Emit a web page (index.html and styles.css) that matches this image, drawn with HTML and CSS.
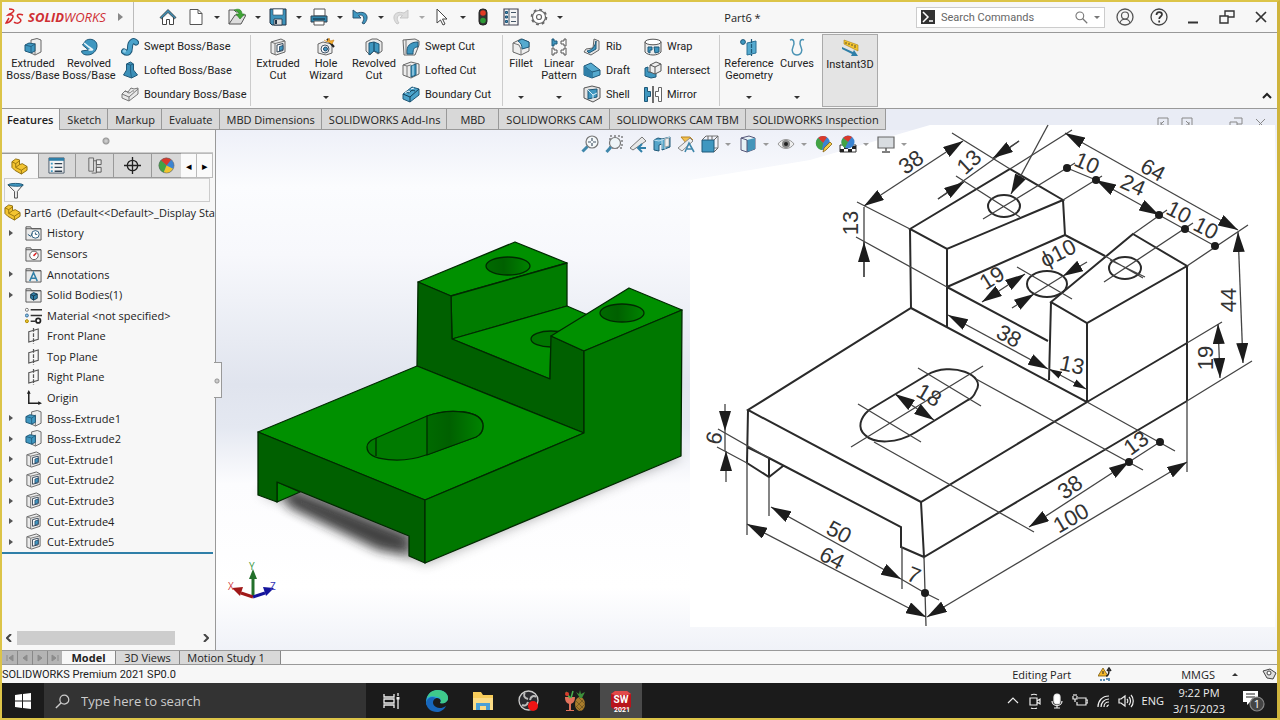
FILE: index.html
```html
<!DOCTYPE html>
<html lang="en">

<head>
    <meta charset="UTF-8">
    <meta name="viewport" content="width=device-width, initial-scale=1.0">
    <title>Part6 - SOLIDWORKS</title>
    <link rel="stylesheet" href="styles.css">
</head>

<body>
    <!-- icon set -->
    <svg class="defs" width="0" height="0" aria-hidden="true">
        <symbol id="i-home" viewBox="0 0 18 18"><path d="M3.500 9v7.500h4v-5h3v5h4V9" fill="#fff" stroke="#444" /><path d="M1 9.500L9 1.500l8 8-1.500 1.200L9 4.500l-6.500 6.200z" fill="#3a8fb7" stroke="#333" stroke-width=".8" /></symbol>
        <symbol id="i-new" viewBox="0 0 18 18"><path d="M3 1.500h8l4 4v11H3z" fill="#fff" stroke="#555" /><path d="M11 1.500v4h4" fill="none" stroke="#555" /></symbol>
        <symbol id="i-open" viewBox="0 0 18 18"><path d="M1 16V2h5l2 2h4v3" fill="#eee" stroke="#555" /><path d="M1 16L7 7h11l-5 9z" fill="#ddd" stroke="#555" /><path d="M6 2c5-2 8 0 8 4h2.500L12 11 8 6h3c0-2-2-3-5-4z" fill="#3fa535" stroke="#237a1c" stroke-width=".6" /></symbol>
        <symbol id="i-save" viewBox="0 0 18 18"><path d="M1 1h16v16H3l-2-2z" fill="#3d93bb" stroke="#234" /><path d="M4 1h10v6H4z" fill="#fff" stroke="#345" stroke-width=".6" /><path d="M5 11h8v6H5z" fill="#ddd" stroke="#234" stroke-width=".8" /><path d="M7 12v4" stroke="#234" stroke-width="2" /></symbol>
        <symbol id="i-print" viewBox="0 0 18 18"><path d="M4 1h11v7H4z" fill="#fff" stroke="#555" /><path d="M1 8h16v6H1z" fill="#2f86ad" stroke="#345" /><path d="M4 13h10v4H4z" fill="#fff" stroke="#555" /><path d="M3 11h12" stroke="#123" /></symbol>
        <symbol id="i-undo" viewBox="0 0 18 18"><path d="M2 2v8h8L7.500 7.500c5-2 7 3 3.500 7.500l2 1c6-6 3-14-7-11z" fill="#3f97c0" stroke="#244a66" stroke-width=".9" /></symbol>
        <symbol id="i-redo" viewBox="0 0 18 18"><path d="M16 2v8H8l2.500-2.500c-5-2-7 3-3.500 7.500l-2 1C-1 10 2 2 12 5z" fill="#ddd" stroke="#c4c4c4" stroke-width=".9" /></symbol>
        <symbol id="i-cursor" viewBox="0 0 18 18"><path d="M4 1l10 10H9.500l2.500 5-2 1-2.500-5L4 15z" fill="#fff" stroke="#444" /></symbol>
        <symbol id="i-light" viewBox="0 0 18 18"><rect x="5" y="1" width="8" height="16" rx="3.500" fill="#333" stroke="#222" /><circle cx="9" cy="5" r="2.800" fill="#e23a24" /><circle cx="9" cy="12.500" r="2.800" fill="#2d9a36" /></symbol>
        <symbol id="i-options" viewBox="0 0 18 18"><path d="M2 1h14v16H2z" fill="#f4f4f4" stroke="#445" stroke-width="1.200" /><path d="M7 1v16M9 4.500h5M9 9h5M9 13.500h5" stroke="#456" /><path d="M3.500 3.500h2v2h-2zM3.500 8h2v2h-2zM3.500 12.500h2v2h-2z" fill="#3f97c0" stroke="#257" /></symbol>
        <symbol id="i-gear" viewBox="0 0 18 18"><circle cx="9" cy="9" r="6.500" fill="#fff" stroke="#666" stroke-width="1.200" /><circle cx="9" cy="9" r="7.500" fill="none" stroke="#666" stroke-width="1.600" stroke-dasharray="2.900 3" /><circle cx="9" cy="9" r="2.500" fill="none" stroke="#666" stroke-width="1.200" /></symbol>
        <symbol id="i-boss" viewBox="0 0 18 18"><path d="M7 2l6-1.500 4 1.500v12l-6 3-4-2z" fill="#eee" stroke="#666" /><path d="M11 5v12" stroke="#777" /><path d="M1 7l4-2 6 1v7l-4 2-6-2z" fill="#3f97c0" stroke="#1f5878" /><path d="M1 7l6 1.500L11 6M7 8.500V15" fill="none" stroke="#1f5878" stroke-width=".8" /></symbol>
        <symbol id="i-revolve" viewBox="0 0 18 18"><path d="M4 5C6 0 14 0 16.500 5c2 5-2 12-9 12-4 0-6-2-6-4l7-1-6-5z" fill="#3f97c0" stroke="#1f5878" /><path d="M4 5l5 4 4 3M8.500 12l4 0" fill="none" stroke="#e8f5fb" stroke-width="1.600" /></symbol>
        <symbol id="i-sweep" viewBox="0 0 18 18"><path d="M3 13.500c4 3 6 0 6-4 0-6 4-8 6-5" fill="none" stroke="#1f5878" stroke-width="6" stroke-linecap="round" /><path d="M3 13.500c4 3 6 0 6-4 0-6 4-8 6-5" fill="none" stroke="#4ba3cb" stroke-width="4" stroke-linecap="round" /><circle cx="3.500" cy="13" r="1.700" fill="#8ccae6" /></symbol>
        <symbol id="i-loft" viewBox="0 0 18 18"><path d="M5.500 3l4-2 3 2v6l4 5-6 3-8-3 3-5z" fill="#3b8fb8" stroke="#1f5878" /><path d="M5.500 3l4 1 3-1M9.500 4v6l1 7" fill="none" stroke="#1f5878" stroke-width=".8" /></symbol>
        <symbol id="i-boundary" viewBox="0 0 18 18"><path d="M1 9l3-3 3 1 3-4 3 1 4-1v6l-9 7-7-3z" fill="#e9e9e9" stroke="#777" /><path d="M1 9l7 3 9-8M8 12v4M4 6c2 0 2 2 4 2s3-3 5-2" fill="none" stroke="#777" /></symbol>
        <symbol id="i-boundcut" viewBox="0 0 18 18"><path d="M1 9l9-7 7 2v6l-9 7-7-3z" fill="#4ba3cb" stroke="#1f5878" /><path d="M1 9l7 3 9-8M8 12v5M4 7c2 0 3 2 4 0s3-2 5-1" fill="none" stroke="#123f58" /><path d="M3 8l3-2 2 1M9 4l3-1" stroke="#e5f4fb" fill="none" /></symbol>
        <symbol id="i-cut" viewBox="0 0 18 18"><path d="M2 4l10-3 4 2v11l-9 3-5-2z" fill="#ececec" stroke="#666" /><path d="M2 4l4 1.500L16 3M6 5.500V17" fill="none" stroke="#777" /><path d="M8 7l6-1.500v7L8 14z" fill="#fff" stroke="#345" /><path d="M10.500 8.500L14 7.500v4l-3.500 1.500z" fill="#3f97c0" stroke="#246" stroke-width=".8" /></symbol>
        <symbol id="i-hole" viewBox="0 0 18 18"><path d="M1 6l5-2 9 2v9l-6 2-8-2z" fill="#ececec" stroke="#666" /><circle cx="8" cy="11" r="4" fill="#fff" stroke="#456" /><circle cx="8.500" cy="11" r="2" fill="#3f97c0" stroke="#246" /><path d="M10 1l7 8" stroke="#222" stroke-width="2" /><path d="M7 2l3 2 2-4 1 3 4-1-2 4" fill="#f0ac2c" stroke="#c8780f" stroke-width=".6" /></symbol>
        <symbol id="i-revcut" viewBox="0 0 18 18"><path d="M1 4l6-3h5l5 3v9l-4 3-4-3-4 4-4-4z" fill="#e9e9e9" stroke="#666" /><path d="M4 5l5-1v9l-5 4zM9 4l5 2v9l-5-2z" fill="#3f97c0" stroke="#1f5878" /></symbol>
        <symbol id="i-sweepcut" viewBox="0 0 18 18"><path d="M1 2l12-1 4 2v4l-4 10H2z" fill="#ececec" stroke="#666" /><path d="M5 16C4 8 8 4 16 4v5c-4 0-5 2-5 7z" fill="#3f97c0" stroke="#1f5878" /><path d="M4 2v14" stroke="#777" /></symbol>
        <symbol id="i-loftcut" viewBox="0 0 18 18"><path d="M1 4l8-3 8 2v10l-8 4-8-3z" fill="#ececec" stroke="#666" /><path d="M5 5v11M1 4l4 1 4-1" stroke="#777" fill="none" /><path d="M9 5l5-2v11l-5 2z" fill="#3f97c0" stroke="#1f5878" /><path d="M11 4.500v10" stroke="#cfe8f4" /></symbol>
        <symbol id="i-fillet" viewBox="0 0 18 18"><path d="M1 5l8-4 8 3v9l-8 4-8-3z" fill="#eee" stroke="#666" /><path d="M6 3l4-2 7 3v5l-7 2c0-4-1-6-4-8z" fill="#55aacf" stroke="#1f5878" /><path d="M1 5l6 2 2 4v6" fill="none" stroke="#777" /></symbol>
        <symbol id="i-pattern" viewBox="0 0 18 18"><path d="M2 1h2v2h3v3H4v2H2z" fill="#3f97c0" stroke="#1f5878" /><path d="M11 3h3V1h2v7h-2V6h-3zM2 10h2v2h3v3H4v2H2zM11 12h3v-2h2v7h-2v-2h-3z" fill="#fff" stroke="#555" /></symbol>
        <symbol id="i-rib" viewBox="0 0 18 18"><path d="M11 1l5 2v9l-8 5-7-3 2-3 7-1z" fill="#e4e4e4" stroke="#666" /><path d="M13 3v8l-7 4-2-2c5-1 8-4 9-10z" fill="#3f97c0" stroke="#1f5878" /></symbol>
        <symbol id="i-draft" viewBox="0 0 18 18"><path d="M1 5l7-3 9 7v5l-8 3-8-3z" fill="#55aacf" stroke="#1f5878" /><path d="M1 5l8 6 8-2M9 11v6" stroke="#1f5878" fill="none" /><path d="M1 5l8 6v6l-8-3z" fill="#2f7fa8" /></symbol>
        <symbol id="i-shell" viewBox="0 0 18 18"><path d="M1 3l8-2 8 2v10l-7 4-9-4z" fill="#e4e4e4" stroke="#555" /><path d="M5 5l9-1v8l-9 2z" fill="#3f97c0" stroke="#1f5878" /><path d="M5 5l5 5v5M10 10l4-2" stroke="#d9eef7" fill="none" /></symbol>
        <symbol id="i-wrap" viewBox="0 0 18 18"><path d="M1 4v10c3 4 13 4 16 0V4z" fill="#ececec" stroke="#555" /><ellipse cx="9" cy="4" rx="8" ry="2.800" fill="#fff" stroke="#555" /><path d="M4 9h4v3H6v3l-2-1zM10 9h5v5l-4 1z" fill="#3f97c0" stroke="#1f5878" /></symbol>
        <symbol id="i-intersect" viewBox="0 0 18 18"><path d="M1 7l3-1v5h8v5l-5 1-6-2z" fill="#3f97c0" stroke="#1f5878" /><path d="M6 4l6-3 5 2v7l-6 3-5-2z" fill="#eee" stroke="#555" /><path d="M6 4l5 2 6-3M11 6v7" fill="none" stroke="#555" /></symbol>
        <symbol id="i-mirror" viewBox="0 0 18 18"><path d="M0.500 2.500h3v4h3v5h-3v5h-3z" fill="#3f97c0" stroke="#1f5878" /><path d="M17.500 2.500h-3v4h-3v5h3v5h3z" fill="#fff" stroke="#666" /><path d="M9 1v17" stroke="#333" stroke-width="1.400" /></symbol>
        <symbol id="i-refgeo" viewBox="0 0 18 18"><circle cx="3" cy="4" r="2.400" fill="#3f97c0" stroke="#1f5878" /><path d="M7 5l9-2v12l-9 2z" fill="#55aacf" stroke="#2a7196" /><path d="M11.500 1v17" stroke="#1f5878" stroke-width="1.200" stroke-dasharray="4 1" /></symbol>
        <symbol id="i-curves" viewBox="0 0 18 18"><path d="M2 2c4-2 5 3 3 7s0 8 4 8 6-4 4-8-1-9 3-7" fill="none" stroke="#4b93b4" stroke-width="1.500" /></symbol>
        <symbol id="i-instant" viewBox="0 0 18 18"><path d="M3 1l14 5v6L3 5z" fill="#f5c52e" stroke="#a77f10" stroke-width=".6" /><path d="M5 3v2M8 4v2M11 5v2M14 6v3" stroke="#333" stroke-width=".8" /><path d="M1 8l11 5 1-2 4 6-7 0 1-2-10-5z" fill="#2f7fa8" /></symbol>

        <symbol id="i-part" viewBox="0 0 18 18"><path d="M1 4l4-3 4 1v5l3-1 5 3v4l-6 4-7-4-3-3z" fill="#f3c431" stroke="#8d6c0b" /><path d="M1 4l4 2 4-3M5 6v4l6 3M9 7l-4 3M11 13l6-4M11 13v4" fill="none" stroke="#8d6c0b" stroke-width=".9" /></symbol>
        <symbol id="i-props" viewBox="0 0 18 18"><path d="M1 1h16v16H1z" fill="#f4f4f4" stroke="#456" /><path d="M1 1h16v3H1z" fill="#2f7fa8" /><path d="M7 7h8M7 11h8M7 15h8" stroke="#345" stroke-width="1.500" /><path d="M3 6h2v2H3zM3 10h2v2H3zM3 14h2v2H3z" fill="#3f97c0" /></symbol>
        <symbol id="i-config" viewBox="0 0 18 18"><path d="M3 1h5v14H3zM8 4h3v13H6" fill="#ddd" stroke="#666" /><path d="M11 3h5v5h-5zM11 11h5v5h-5z" fill="#eee" stroke="#555" /></symbol>
        <symbol id="i-target" viewBox="0 0 18 18"><circle cx="9" cy="9" r="5.500" fill="none" stroke="#222" stroke-width="1.400" /><path d="M9 0v18M0 9h18" stroke="#222" stroke-width="1.400" /></symbol>
        <symbol id="i-ball" viewBox="0 0 18 18"><circle cx="9" cy="9" r="8" fill="#3b84d1" /><path d="M9 9L3 3.500A8 8 0 0 1 14 2.700z" fill="#d93a2b" /><path d="M9 9L3 3.500A8 8 0 0 0 6 16.500z" fill="#43a344" /><path d="M9 9L6 16.500a8 8 0 0 0 10-4z" fill="#f0c52e" /><circle cx="9" cy="9" r="8" fill="none" stroke="#666" stroke-width=".6" /></symbol>
        <symbol id="i-paint" viewBox="0 0 18 18"><circle cx="8" cy="8" r="7" fill="#3b84d1" /><path d="M8 8L3 3A7 7 0 0 1 12 2.300z" fill="#d93a2b" /><path d="M8 8L3 3a7 7 0 0 0 4 12z" fill="#43a344" /><path d="M8 17l1-4 6-6 2 2-6 6z" fill="#f5cf4a" stroke="#876012" stroke-width=".8" /></symbol>
        <symbol id="i-funnel" viewBox="0 0 18 18"><path d="M1 3h16l-6 7v7H8v-7z" fill="#f6f6f6" stroke="#444" /><path d="M1 3c2-2 14-2 16 0s-14 2-16 0z" fill="#3f97c0" stroke="#1f5878" /></symbol>
        <symbol id="i-history" viewBox="0 0 18 18"><path d="M1 3h5l1 2h10v12H1z" fill="#eaeaea" stroke="#555" /><path d="M1 5h16" stroke="#555" /><circle cx="11" cy="11" r="4" fill="#fff" stroke="#257" /><path d="M11 9v2h2M3 11l3 2 2-3" fill="none" stroke="#257" /></symbol>
        <symbol id="i-sensors" viewBox="0 0 18 18"><path d="M1 3h5l1 2h10v12H1z" fill="#eaeaea" stroke="#555" /><path d="M1 5h16" stroke="#555" /><circle cx="9.500" cy="11" r="4.500" fill="#fff" stroke="#555" /><path d="M9 11.500l3-3" stroke="#d22" stroke-width="1.600" /></symbol>
        <symbol id="i-annot" viewBox="0 0 18 18"><path d="M1 3h5l1 2h10v12H1z" fill="#eaeaea" stroke="#555" /><path d="M1 5h16" stroke="#555" /><path d="M5 16L9 7l4 9M7 13h5" fill="none" stroke="#2f7fa8" stroke-width="1.500" /></symbol>
        <symbol id="i-bodies" viewBox="0 0 18 18"><path d="M1 3h5l1 2h10v12H1z" fill="#eaeaea" stroke="#555" /><path d="M1 5h16" stroke="#555" /><path d="M6 9l3-2 4 1.500V13l-4 2-3-2z" fill="#2f7fa8" stroke="#153f56" /><path d="M6 9l3 1.500L13 8.500M9 10.500V15" fill="none" stroke="#123" stroke-width=".8" /></symbol>
        <symbol id="i-material" viewBox="0 0 18 18"><path d="M6 3h12M6 9h12M6 15h5" stroke="#333" stroke-width="1.600" /><circle cx="2" cy="3" r="1.600" fill="#fff" stroke="#777" /><circle cx="2" cy="9" r="1.600" fill="#8ccae6" stroke="#369" /><circle cx="2" cy="15" r="1.600" fill="#f0c52e" stroke="#a80" /><circle cx="14" cy="14.500" r="2.400" fill="#fff" stroke="#222" stroke-width="1.800" /></symbol>
        <symbol id="i-plane" viewBox="0 0 18 18"><path d="M4 5l10-3v11L4 16z" fill="none" stroke="#555" stroke-width="1.200" /><path d="M9 1v17" stroke="#555" stroke-width="1.300" stroke-dasharray="4 1.500" /></symbol>
        <symbol id="i-origin" viewBox="0 0 18 18"><path d="M4 3v12h12" fill="none" stroke="#222" stroke-width="1.600" /><path d="M2 5l2-4 2 4zM14 13l4 2-4 2z" fill="#222" /></symbol>

        <symbol id="i-zoomfit" viewBox="0 0 18 18"><circle cx="11" cy="7" r="6" fill="#f4f8fa" stroke="#777" stroke-width="1.200" /><path d="M11 3v8M7 7h8" stroke="#456" stroke-width="1.200" stroke-dasharray="3 2" /><path d="M6.500 11.500L1.500 16.500" stroke="#3f87ab" stroke-width="3" /></symbol>
        <symbol id="i-zoomarea" viewBox="0 0 18 18"><path d="M5 1h12v12H5z" fill="none" stroke="#444" stroke-dasharray="2 2" /><circle cx="10" cy="8" r="5.500" fill="#eef5f8" stroke="#777" stroke-width="1.200" /><path d="M6 12l-4.500 5" stroke="#3f87ab" stroke-width="3" /></symbol>
        <symbol id="i-prev" viewBox="0 0 18 18"><path d="M1 13L13 2l4 4L4 15z" fill="#e8e8e8" stroke="#777" /><path d="M17 13H10M13 9l-4 4 4 4" fill="none" stroke="#2f7fa8" stroke-width="2" /></symbol>
        <symbol id="i-section" viewBox="0 0 18 18"><path d="M1 5l4-2 4 1 8-2v10l-8 3v-6l-3 1v6l-5-1z" fill="#55a5c9" stroke="#1f5878" /><path d="M9 4v10M1 5l5 1 11-4M12 5v9" stroke="#bfe0ef" fill="none" /><path d="M12 4l4-1v8l-4 1z" fill="#eee" stroke="#888" stroke-width=".6" /></symbol>
        <symbol id="i-dynview" viewBox="0 0 18 18"><path d="M4 2h9l3 3-6 4z" fill="#f3c14d" stroke="#b98522" /><path d="M1 13L13 3l3 3L5 16z" fill="#eee" stroke="#888" /><path d="M8 17l4-9 5 9M10 14h5" fill="none" stroke="#3f87ab" stroke-width="1.600" /></symbol>
        <symbol id="i-orient" viewBox="0 0 18 18"><path d="M5 1h12v12h-4" fill="none" stroke="#777" /><path d="M1 5h12v12H1z" fill="#3f97c0" stroke="#1f5878" /><path d="M1 5l4-4M13 5l4-4M13 17l4-4M7 1v4M11 1v4" stroke="#666" fill="none" /></symbol>
        <symbol id="i-style" viewBox="0 0 18 18"><path d="M2 3l8-2 6 2v11l-8 3-6-2z" fill="#e6f1f6" stroke="#557" /><path d="M8 5l8-2v11l-8 3z" fill="#4595ba" /><path d="M2 3l6 2v12" stroke="#557" fill="none" /></symbol>
        <symbol id="i-eye" viewBox="0 0 18 18"><path d="M1 9c4-6 12-6 16 0-4 6-12 6-16 0z" fill="#eee" stroke="#999" /><circle cx="9" cy="9" r="4" fill="#888" /><circle cx="9" cy="9" r="2" fill="#222" /></symbol>
        <symbol id="i-monitor" viewBox="0 0 18 18"><path d="M1 2h16v11H1z" fill="#d8dce0" stroke="#666" stroke-width="1.200" /><path d="M9 13v3M5 17h8" stroke="#555" stroke-width="1.400" /></symbol>
        <symbol id="i-checker" viewBox="0 0 18 18"><path d="M1 10h16v7H1z" fill="#fff" stroke="#333" /><path d="M1 14h4v3H1zM9 14h4v3H9zM5 11h4v3H5zM13 11h4v3h-4z" fill="#222" /><circle cx="9" cy="7" r="6.500" fill="#3b84d1" /><path d="M9 7L4 3a6.500 6.500 0 0 1 9-1z" fill="#d93a2b" /><path d="M9 7L4 3a6.500 6.500 0 0 0 2 10z" fill="#43a344" /></symbol>
        <symbol id="i-restore" viewBox="0 0 18 18"><path d="M7 3h9v6h-9z" fill="#f7f7f7" stroke="currentColor" stroke-width="1.400" /><path d="M2 8h8v7H2z" fill="#f7f7f7" stroke="currentColor" stroke-width="1.400" /></symbol>
        <symbol id="i-close" viewBox="0 0 18 18"><path d="M4 4l10 10M14 4L4 14" stroke="currentColor" stroke-width="1.700" /></symbol>
        <symbol id="i-min" viewBox="0 0 18 18"><path d="M4 14.500h10" stroke="currentColor" stroke-width="2" /></symbol>
        <symbol id="i-user" viewBox="0 0 18 18"><circle cx="9" cy="9" r="8" fill="none" stroke="#555" stroke-width="1.300" /><circle cx="9" cy="7.500" r="3.500" fill="none" stroke="#555" stroke-width="1.200" /><path d="M4 15c1-5 9-5 10 0" fill="none" stroke="#555" stroke-width="1.200" /></symbol>
        <symbol id="i-help" viewBox="0 0 18 18"><circle cx="9" cy="9" r="8" fill="none" stroke="#444" stroke-width="1.300" /><path d="M6.500 7c0-4 5.500-3.500 5.500-.5C12 8.500 9.200 8.500 9.200 11M9.200 12.500v2" fill="none" stroke="#333" stroke-width="1.700" /></symbol>
        <symbol id="i-search" viewBox="0 0 18 18"><circle cx="7.500" cy="7.500" r="5" fill="none" stroke="currentColor" stroke-width="1.400" /><path d="M11 11l6 6" stroke="currentColor" stroke-width="1.600" /></symbol>
    </svg>

    <div class="app">
        <header class="titlebar">
            <a class="logo" href="#">
                <svg width="20" height="20" viewBox="0 0 20 20" fill="none" stroke="#d4282c" stroke-width="1.500"><path d="M4 2c4 0 6 1 4 3S4 7 3 8c5-1 6 1 4 4s-4 4-6 4l3-5M18 8c-4-2-7 0-5 2s4 3 2 5-5 1-6 0" /></svg>
                <span><b>SOLID</b>WORKS</span>
                <i class="caret-right"></i>
            </a>
            <nav class="tools">
                <button class="tool apart" aria-label="Home"><svg><use href="#i-home" /></svg></button>
                <button class="tool" aria-label="New"><svg><use href="#i-new" /></svg></button><button class="drop" aria-label="New menu"></button>
                <button class="tool" aria-label="Open"><svg><use href="#i-open" /></svg></button><button class="drop" aria-label="Open menu"></button>
                <button class="tool" aria-label="Save"><svg><use href="#i-save" /></svg></button><button class="drop" aria-label="Save menu"></button>
                <button class="tool" aria-label="Print"><svg><use href="#i-print" /></svg></button><button class="drop" aria-label="Print menu"></button>
                <button class="tool" aria-label="Undo"><svg><use href="#i-undo" /></svg></button><button class="drop" aria-label="Undo menu"></button>
                <button class="tool" aria-label="Redo"><svg><use href="#i-redo" /></svg></button><button class="drop faded" aria-label="Redo menu"></button>
                <button class="tool" aria-label="Select"><svg><use href="#i-cursor" /></svg></button><button class="drop" aria-label="Select menu"></button>
                <button class="tool apart" aria-label="Rebuild"><svg><use href="#i-light" /></svg></button>
                <button class="tool apart" aria-label="File properties"><svg><use href="#i-options" /></svg></button>
                <button class="tool" aria-label="Options"><svg><use href="#i-gear" /></svg></button><button class="drop" aria-label="Options menu"></button>
            </nav>
            <h1>Part6 *</h1>
            <label class="command-search">
                <svg width="14" height="14" viewBox="0 0 14 14"><path d="M0 0h14v14H0z" fill="#333" /><path d="M2 2l5 5-5 5M8 11h4" fill="none" stroke="#fff" stroke-width="1.500" /></svg>
                <input type="text" placeholder="Search Commands">
                <svg class="glass" width="14" height="14"><use href="#i-search" /></svg>
                <i class="arrow"></i>
            </label>
            <div class="window-buttons">
                <button aria-label="Account"><svg><use href="#i-user" /></svg></button>
                <button aria-label="Help"><svg><use href="#i-help" /></svg></button>
                <button aria-label="Minimize"><svg><use href="#i-min" /></svg></button>
                <button aria-label="Restore"><svg><use href="#i-restore" /></svg></button>
                <button aria-label="Close"><svg><use href="#i-close" /></svg></button>
            </div>
        </header>

        <section class="ribbon">
            <div class="group group-boss">
                <button class="big wide"><svg><use href="#i-boss" /></svg><span>Extruded Boss/Base</span></button>
                <button class="big wide"><svg><use href="#i-revolve" /></svg><span>Revolved Boss/Base</span></button>
                <div class="stack">
                    <button><svg><use href="#i-sweep" /></svg>Swept Boss/Base</button>
                    <button><svg><use href="#i-loft" /></svg>Lofted Boss/Base</button>
                    <button><svg><use href="#i-boundary" /></svg>Boundary Boss/Base</button>
                </div>
            </div>
            <div class="group group-cut">
                <button class="big"><svg><use href="#i-cut" /></svg><span>Extruded Cut</span></button>
                <button class="big"><svg><use href="#i-hole" /></svg><span>Hole Wizard</span><i class="arrow"></i></button>
                <button class="big"><svg><use href="#i-revcut" /></svg><span>Revolved Cut</span></button>
                <div class="stack">
                    <button><svg><use href="#i-sweepcut" /></svg>Swept Cut</button>
                    <button><svg><use href="#i-loftcut" /></svg>Lofted Cut</button>
                    <button><svg><use href="#i-boundcut" /></svg>Boundary Cut</button>
                </div>
            </div>
            <div class="group group-detail">
                <button class="big slim"><svg><use href="#i-fillet" /></svg><span>Fillet</span><i class="arrow"></i></button>
                <button class="big narrow"><svg><use href="#i-pattern" /></svg><span>Linear Pattern</span><i class="arrow"></i></button>
                <div class="stack first">
                    <button><svg><use href="#i-rib" /></svg>Rib</button>
                    <button><svg><use href="#i-draft" /></svg>Draft</button>
                    <button><svg><use href="#i-shell" /></svg>Shell</button>
                </div>
                <div class="stack">
                    <button><svg><use href="#i-wrap" /></svg>Wrap</button>
                    <button><svg><use href="#i-intersect" /></svg>Intersect</button>
                    <button><svg><use href="#i-mirror" /></svg>Mirror</button>
                </div>
            </div>
            <div class="group group-ref">
                <button class="big wide"><svg><use href="#i-refgeo" /></svg><span>Reference Geometry</span><i class="arrow"></i></button>
                <button class="big narrow"><svg><use href="#i-curves" /></svg><span>Curves</span><i class="arrow"></i></button>
            </div>
            <button class="big wide pressed"><svg><use href="#i-instant" /></svg><span>Instant3D</span></button>
            <button class="collapse" aria-label="Collapse ribbon"><svg width="10" height="8" viewBox="0 0 10 8"><path d="M1 6l4-4 4 4" fill="none" stroke="#222" stroke-width="2" /></svg></button>
        </section>

        <nav class="tabs">
            <button class="active">Features</button>
            <button>Sketch</button>
            <button>Markup</button>
            <button>Evaluate</button>
            <button>MBD Dimensions</button>
            <button>SOLIDWORKS Add-Ins</button>
            <button class="roomy">MBD</button>
            <button>SOLIDWORKS CAM</button>
            <button>SOLIDWORKS CAM TBM</button>
            <button>SOLIDWORKS Inspection</button>
            <div class="doc-buttons">
                <svg width="12" height="12" viewBox="0 0 12 12"><path d="M1 1h10v10H1zM7 4L4 7M4 5v3h3" /></svg>
                <svg width="12" height="12" viewBox="0 0 12 12"><path d="M1 1h10v10H1zM5 4l3 3M8 5v3H5" /></svg>
                <svg class="gap" width="14" height="12" viewBox="0 0 14 12"><path d="M5 1h8v6H8M1 5h7v6H1z" /></svg>
                <svg width="12" height="12" viewBox="0 0 12 12"><path d="M1 2l9 9M10 2L1 11" /></svg>
            </div>
        </nav>

        <main class="workspace">
            <aside class="panel">
                <div class="splitter"></div>
                <div class="panel-tabs">
                    <button class="active" aria-label="Feature tree"><svg><use href="#i-part" /></svg></button>
                    <button aria-label="Properties"><svg><use href="#i-props" /></svg></button>
                    <button aria-label="Configurations"><svg><use href="#i-config" /></svg></button>
                    <button aria-label="Dimensions"><svg><use href="#i-target" /></svg></button>
                    <button class="cut-off" aria-label="Display"><svg><use href="#i-ball" /></svg></button>
                    <button class="spin" aria-label="Previous tab">◂</button>
                    <button class="spin" aria-label="Next tab">▸</button>
                </div>
                <label class="filter"><svg><use href="#i-funnel" /></svg><input type="text" aria-label="Filter tree"></label>
                <ul class="tree">
                    <li class="root"><svg><use href="#i-part" /></svg>Part6&nbsp; (Default&lt;&lt;Default&gt;_Display Sta</li>
                    <li class="open"><svg><use href="#i-history" /></svg>History</li>
                    <li><svg><use href="#i-sensors" /></svg>Sensors</li>
                    <li class="open"><svg><use href="#i-annot" /></svg>Annotations</li>
                    <li class="open"><svg><use href="#i-bodies" /></svg>Solid Bodies(1)</li>
                    <li><svg><use href="#i-material" /></svg>Material &lt;not specified&gt;</li>
                    <li><svg><use href="#i-plane" /></svg>Front Plane</li>
                    <li><svg><use href="#i-plane" /></svg>Top Plane</li>
                    <li><svg><use href="#i-plane" /></svg>Right Plane</li>
                    <li><svg><use href="#i-origin" /></svg>Origin</li>
                    <li class="open"><svg><use href="#i-boss" /></svg>Boss-Extrude1</li>
                    <li class="open"><svg><use href="#i-boss" /></svg>Boss-Extrude2</li>
                    <li class="open"><svg><use href="#i-cut" /></svg>Cut-Extrude1</li>
                    <li class="open"><svg><use href="#i-cut" /></svg>Cut-Extrude2</li>
                    <li class="open"><svg><use href="#i-cut" /></svg>Cut-Extrude3</li>
                    <li class="open"><svg><use href="#i-cut" /></svg>Cut-Extrude4</li>
                    <li class="open"><svg><use href="#i-cut" /></svg>Cut-Extrude5</li>
                </ul>
                <div class="scrollbar">
                    <svg width="6" height="8" viewBox="0 0 6 8"><path d="M5 0L1 4l4 4" /></svg>
                    <i class="thumb"></i>
                    <svg width="6" height="8" viewBox="0 0 6 8"><path d="M1 0l4 4-4 4" /></svg>
                </div>
                <div class="handle"></div>
            </aside>

            <section class="canvas">
                <svg class="scene" viewBox="216 130 1061 520">
                    <defs>
                        <marker id="arrow" viewBox="0 0 20 12" refX="20" refY="6" markerWidth="20" markerHeight="12" markerUnits="userSpaceOnUse" orient="auto-start-reverse"><path d="M0 0l20 6-20 6z" fill="#1c1c1c" /></marker>
                        <marker id="small" viewBox="0 0 20 12" refX="20" refY="6" markerWidth="13" markerHeight="8" markerUnits="userSpaceOnUse" orient="auto-start-reverse"><path d="M0 0l20 6-20 6z" fill="#1c1c1c" /></marker>
                        <linearGradient id="bore"><stop offset="0" stop-color="#006a00" /><stop offset=".4" stop-color="#006000" /><stop offset="1" stop-color="#008400" /></linearGradient>
                        <filter id="soft" x="-20%" y="-20%" width="140%" height="140%"><feGaussianBlur stdDeviation="6" /></filter>
                    </defs>

                    <!-- shadow on the ground -->
                    <path d="M258 492l150 66 18 6 255-107-20-14-330 30z" fill="#555" opacity=".45" filter="url(#soft)" />
                    <path d="M282 486l127 50v18l-30-4-90-44z" fill="#222" opacity=".8" filter="url(#soft)" />

                    <!-- solid model -->
                    <g stroke="#002a00" stroke-width="1.300" stroke-linejoin="round">
                        <path d="M515 242l52 21-116 33-33-14z" fill="#009000" />
                        <path d="M451 296l116-33v43l-115 33z" fill="#007c00" />
                        <path d="M452 339l115-33 21 9-37 21-1 43z" fill="#009000" />
                        <ellipse cx="551" cy="339" rx="20" ry="8" fill="#007600" />
                        <path d="M418 282l33 14 1 43 98 40 1-43 33 15v82l-167-67z" fill="#006000" />
                        <path d="M629 288l53 22-98 41-33-15z" fill="#009000" />
                        <path d="M417 366l167 67-159 67-167-68z" fill="#009000" />
                        <path d="M277 482l23 10-23 10z" fill="#008400" />
                        <path d="M258 432l167 68v63l-16-7v-20l-132-54v20l-19-7z" fill="#006000" />
                        <path d="M682 310l-1 146-256 107v-63l159-67v-82z" fill="#007800" />
                        <path d="M376 438l51-22c22-8 56-6 56 10 0 6-3 9-7 11l-50 18c-22 8-59 7-59-8 0-4 4-7 9-9z" fill="#007a00" />
                        <path d="M427 416c22-8 56-6 56 10 0 6-3 9-7 11l-49 18z" fill="url(#bore)" />
                        <path d="M376 438v18" />
                        <ellipse cx="508" cy="266" rx="22" ry="9" fill="url(#bore)" />
                        <ellipse cx="622" cy="313" rx="22" ry="9" fill="url(#bore)" />
                    </g>

                    <!-- axis triad -->
                    <g font-family="Open Sans, sans-serif" font-size="10">
                        <path d="M253 597V578" stroke="#23702b" stroke-width="3" /><path d="M249 579l4-10 4 10z" fill="#23702b" />
                        <path d="M253 597l-12-4" stroke="#a01818" stroke-width="3" /><path d="M232 588l11-1-3 9z" fill="#a01818" />
                        <path d="M253 597l12-4" stroke="#14149c" stroke-width="3" /><path d="M274 588l-11-1 3 9z" fill="#14149c" />
                        <text x="249" y="570" fill="#3c9a46">Y</text><text x="228" y="590" fill="#d04040">X</text><text x="270" y="590" fill="#3434b8">Z</text>
                    </g>

                    <!-- drawing sheet -->
                    <path d="M930 125h345v502H690V180l120-20z" fill="#fff" />
                    <g class="outline">
                        <path d="M910 229L1010 169 1063 200 947 249zM910 229l1 79M947 249v78M1063 200l2 35-118 52M1065 235l40 21M947 287l101 54" />
                        <path d="M1133 234l54 32-100 57-36-21zM1051 302l-2 78M1087 323v79M1187 266v135" />
                        <path d="M911 308l176 94-166 100-173-92zM748 410l-1 53 22 14 14-11M921 502l3 55 263-156M1087 402l100-59M747 447l22 11 132 69v20l23 10M769 458v19" />
                        <path d="M869 410l58-35c24-14 60 0 49 16-2 5-5 8-8 9l-52 32c-19 12-42 12-51 3-8-7-5-17 4-25z" />
                        <ellipse cx="1004" cy="206" rx="16" ry="11" /><ellipse cx="1125" cy="268" rx="16" ry="11" /><ellipse cx="1047" cy="284" rx="20" ry="13" />
                    </g>
                    <g class="thin">
                        <path d="M857 202l53 27M856 237l91 50M952 133l58 36M1010 169l62-39M956 176l64 41M983 219l92-56M1063 200l39-24M1104 282l89-59M1105 256l38 22M1133 234l34-24M1187 266l61-41M1110 260l35 17" />
                        <path d="M1187 343l35-21M1187 401l65-40M1187 401v71M1087 402l88 49M976 379l167 91M874 442l160 90M924 557l2 69M902 547v42M769 477v39M747 463v72M718 429l51 29M717 447l30 16" />
                        <path d="M851 447l132-81M858 404l63 38M918 368l63 38M1017 267l55 32M1067 168l29 12M1159 215l56 31M925 593l-24-14M925 593l14 7M1129 462l31-20M725 431v20M938 199l81-58M864 207v70M1034 294l29-18" />
                    </g>
                    <g class="dim">
                        <path d="M864 206l99-65" /><path d="M1065 133l173 97" /><path d="M1096 180l63 35" />
                        <path d="M1238 232l5 131" /><path d="M1218 324l2 54" /><path d="M982 302l43-28" /><path d="M948 315l100 54" />
                        <path d="M895 394l39 26" /><path d="M771 507l130 72" /><path d="M747 524l179 93" /><path d="M927 617l260-155" /><path d="M1029 527l100-65" />
                    </g>
                    <g class="dim-end">
                        <path d="M938 199l26-17" /><path d="M1019 141l-26 17" /><path d="M864 277v-35" /><path d="M1048 125l-37 69" />
                        <path d="M1087 262l-24 14" /><path d="M1012 308l22-14" /><path d="M725 404v27" /><path d="M726 482v-31" />
                    </g>
                    <path class="dim-small" d="M1049 369l37 20" />
                    <g fill="#1c1c1c"><circle cx="1067" cy="168" r="4" /><circle cx="1096" cy="180" r="4" /><circle cx="1159" cy="215" r="4" /><circle cx="1185" cy="229" r="4" /><circle cx="1215" cy="246" r="4" /><circle cx="1160" cy="442" r="4" /><circle cx="1129" cy="462" r="4" /><circle cx="925" cy="593" r="4" /></g>
                    <g class="numbers">
                        <text transform="translate(911 162) rotate(-35)">38</text>
                        <text transform="translate(969 162) rotate(-43)">13</text>
                        <text transform="translate(850 223) rotate(-90)">13</text>
                        <text transform="translate(1153 170) rotate(29)">64</text>
                        <text transform="translate(1087 163) rotate(24)">10</text>
                        <text transform="translate(1133 185) rotate(24)">24</text>
                        <text transform="translate(1179 212) rotate(27)">10</text>
                        <text transform="translate(1206 228) rotate(27)">10</text>
                        <text transform="translate(1228 300) rotate(-90)">44</text>
                        <text transform="translate(1205 358) rotate(-90)">19</text>
                        <text transform="translate(1058 253) rotate(-27)">ϕ10</text>
                        <text transform="translate(992 278) rotate(-32)">19</text>
                        <text transform="translate(1009 336) rotate(29)">38</text>
                        <text transform="translate(1072 365) rotate(12)">13</text>
                        <text transform="translate(929 395) rotate(30)">18</text>
                        <text transform="translate(714 438) rotate(-75)">6</text>
                        <text transform="translate(1136 443) rotate(-36)">13</text>
                        <text transform="translate(1070 487) rotate(-35)">38</text>
                        <text transform="translate(1071 518) rotate(-30)">100</text>
                        <text transform="translate(839 532) rotate(28)">50</text>
                        <text transform="translate(832 558) rotate(28)">64</text>
                        <text transform="translate(914 575) rotate(22)">7</text>
                    </g>
                </svg>
                <div class="view-tools">
                    <button aria-label="Zoom to fit"><svg><use href="#i-zoomfit" /></svg></button>
                    <button aria-label="Zoom to area"><svg><use href="#i-zoomarea" /></svg></button>
                    <button aria-label="Previous view"><svg><use href="#i-prev" /></svg></button>
                    <button aria-label="Section view"><svg><use href="#i-section" /></svg></button>
                    <button aria-label="Dynamic views"><svg><use href="#i-dynview" /></svg></button>
                    <button class="menu" aria-label="Orientation"><svg><use href="#i-orient" /></svg><i class="arrow"></i></button>
                    <button class="menu" aria-label="Display style"><svg><use href="#i-style" /></svg><i class="arrow"></i></button>
                    <button class="menu" aria-label="Hide items"><svg><use href="#i-eye" /></svg><i class="arrow"></i></button>
                    <button aria-label="Appearance"><svg><use href="#i-paint" /></svg></button>
                    <button class="menu" aria-label="Scene"><svg><use href="#i-checker" /></svg><i class="arrow"></i></button>
                    <button class="menu" aria-label="View settings"><svg><use href="#i-monitor" /></svg><i class="arrow"></i></button>
                </div>
            </section>
        </main>

        <nav class="bottom-tabs">
            <div class="pager">
                <svg width="60" height="14" viewBox="0 0 60 14"><path d="M15.500 0v14M30.500 0v14M45.500 0v14" stroke="#888" /><path d="M5 4v6M11 4L7 7l4 3zM25 4l-4 3 4 3zM36 4l4 3-4 3zM50 4l4 3-4 3zM56 4v6" fill="#8c8c8c" stroke="#8c8c8c" /></svg>
            </div>
            <button class="active">Model</button>
            <button>3D Views</button>
            <button class="last">Motion Study 1</button>
        </nav>

        <footer class="status">
            <span class="product">SOLIDWORKS Premium 2021 SP0.0</span>
            <span class="mode">Editing Part</span>
            <svg class="warn" width="14" height="14" viewBox="0 0 14 14"><path d="M5 1l5 8H0z" fill="#f4b82b" stroke="#7a5a10" stroke-width=".8" /><path d="M5 4v3" stroke="#222" /><path d="M8 9c3 0 3-3 3-6M9 4l2-3 2 3" stroke="#222" stroke-width="1.500" fill="none" /><path d="M2 13h2M5 13h2M8 12h2M11 11v3" stroke="#2f6fa0" stroke-width="1.500" /></svg>
            <span class="units">MMGS</span>
            <i class="arrow up"></i>
            <svg class="tag" width="15" height="12" viewBox="0 0 15 12"><path d="M1 3l7-2 6 4-3 6-6-1z" fill="#ddd" stroke="#444" /><circle cx="7" cy="5" r="2" fill="#fff" stroke="#444" /></svg>
        </footer>

        <footer class="taskbar">
            <button class="start" aria-label="Start"><svg width="16" height="16" viewBox="0 0 16 16"><path d="M0 2l7-1v6.500H0zM8 1l8-1v7.500H8zM0 8.500h7V15l-7-1zM8 8.500h8V16l-8-1z" fill="#fff" /></svg></button>
            <label class="search"><svg width="16" height="16"><use href="#i-search" /></svg><input type="text" placeholder="Type here to search"></label>
            <button class="app-icon" aria-label="Task view"><svg viewBox="0 0 22 22"><path d="M4 4v3h10V4M4 18v-3h10v3M4 9h10v4H4zM18 3v3M18 9v10" fill="none" stroke="#eee" stroke-width="1.300" /><path d="M16.500 7h3v2.500h-3z" fill="#eee" /></svg></button>
            <button class="app-icon" aria-label="Edge"><svg viewBox="0 0 22 22"><path d="M0 12C0 5 5 0 12 0c6 0 10 4 10 8s-4 6-8 5c2-2 0-5-3-5-5 0-7 6-3 11-4-1-8-3-8-7z" fill="#2aa6d8" /><path d="M1 8C3 2 7 0 12 0c6 0 10 4 10 8s-4 6-8 5c2-2 1-5-2-6-5-1-8-1-11 1z" fill="#3fc98b" /><path d="M0 12c2-5 6-6 10-4-4 2-4 7 0 9 3 2 7 1 10-1-2 4-6 6-9 6-6 0-11-4-11-10z" fill="#1766bb" /></svg></button>
            <button class="app-icon" aria-label="File Explorer"><svg viewBox="0 0 22 22"><path d="M1 2h8l2 3h10v15H1z" fill="#f7cc5a" /><path d="M1 8h20v12H1z" fill="#fbdc86" /><path d="M4 13h14v7h-4v-4H8v4H4z" fill="#4aa0d6" /></svg></button>
            <button class="app-icon" aria-label="Recorder"><svg viewBox="0 0 22 22"><circle cx="10.500" cy="10.500" r="9.500" fill="#2b2b30" stroke="#ccc" stroke-width="1.300" /><path d="M10 9c-4-1-5-4-3-6M12 10c1-4 4-5 6-3M10 12c-1 4-4 4-6 3" fill="none" stroke="#bbb" stroke-width="2" /><circle cx="15" cy="16" r="5" fill="#f01414" /></svg></button>
            <button class="app-icon" aria-label="Cocktail"><svg viewBox="0 0 22 22"><ellipse cx="16" cy="14" rx="5" ry="7" fill="#a87c2c" /><path d="M12 11l8 8M12 16l5 5M15 8l6 6M20 9l-8 8M21 14l-6 6" stroke="#6e5420" stroke-width=".8" /><path d="M16 8l-4-6 3 2 1-4 1 4 4-2-3 6z" fill="#3d8f3a" /><path d="M1 7h10c0 6-3 6-4 7v6h3v1H2v-1h3v-6C3 13 1 12 1 7z" fill="#e2725b" /><path d="M2 2l4 6M9 1l-2 7" stroke="#4bb04f" stroke-width="1.500" /><circle cx="3" cy="4" r="2" fill="#d93a2b" /></svg></button>
            <button class="app-icon current" aria-label="SOLIDWORKS 2021"><svg viewBox="0 0 22 22"><path d="M1 4l4-3h12l4 3v13l-4 3H5l-4-3z" fill="#b8141c" /><path d="M1 4l4-3h12l4 3-4 1H5z" fill="#e14a4a" /><text x="11" y="13" class="sw">SW</text><text x="12" y="22" class="year">2021</text></svg></button>
            <div class="tray">
                <svg width="14" height="16" viewBox="0 0 14 16"><path d="M2 10l5-5 5 5" /></svg>
                <svg width="14" height="16" viewBox="0 0 14 16"><path d="M2 5h7v7H2zM9 8l3-2v5l-3-2M3 2c2-1 4-1 6 0M3 15c2 1 4 1 6 0" /></svg>
                <svg width="14" height="16" viewBox="0 0 14 16"><rect x="4" y="1" width="6" height="10" rx="3" fill="#fff" /><path d="M2 8c0 6 10 6 10 0M7 12v3M4 15h6" /></svg>
                <svg width="16" height="16" viewBox="0 0 16 16"><path d="M6 5h8v7H5V9M14 7h2v3h-2M1 3v3h4V3M2 1v2M4 1v2M3 6v3" /></svg>
                <svg width="14" height="16" viewBox="0 0 14 16"><path d="M2 14C2 8 6 3 13 3M5 14c0-4 3-8 8-8M8 14c0-3 2-5 5-5M11 14c0-1 1-2 2-2" /></svg>
                <svg width="16" height="16" viewBox="0 0 16 16"><path d="M1 6h2l4-3v10l-4-3H1zM9 6c1 1 1 3 0 4M11 4c2 2 2 6 0 8M13 2c3 3 3 9 0 12" /></svg>
                <span class="lang">ENG</span>
                <div class="clock">9:22 PM<br>3/15/2023</div>
                <svg class="note" width="24" height="22" viewBox="0 0 24 22"><path d="M1 1h15v11H8l-3 3v-3H1z" fill="#fff" stroke="none" /><path d="M4 4h9M4 7h9" stroke="#222" /><circle cx="15" cy="14" r="7" fill="#444" stroke="#888" /><text x="15" y="18">1</text></svg>
            </div>
        </footer>
    </div>
</body>

</html>
```
FILE: styles.css
```css
* {
    box-sizing: border-box;
}

body {
    margin: 0;
    font-family: "Open Sans", "Noto Sans", sans-serif;
    font-size: 11px;
    color: #222;
}

button,
input {
    font: inherit;
    color: inherit;
    border: 0;
    padding: 0;
    margin: 0;
    background: none;
}

input {
    outline: none;
    min-width: 0;
}

.defs {
    position: absolute;
}

.app {
    display: flex;
    flex-direction: column;
    min-height: 100vh;
    border: 2px solid #dcc448;
    border-right: 3px solid #cfb43c;
    background: #f7f7f7;
}

.arrow,
.drop::after {
    content: "";
    display: block;
    width: 0;
    height: 0;
    border: 3px solid transparent;
    border-top-color: #333;
    border-bottom-width: 0;
}

.arrow::before {
    content: none;
}

/* title bar */
.titlebar {
    display: flex;
    align-items: center;
    height: 31px;
    border-bottom: 1px solid #999;
}

.logo {
    display: flex;
    align-items: center;
    width: 132px;
    height: 30px;
    padding-left: 3px;
    gap: 3px;
    border-right: 1px solid #bbb;
    color: #cf2f33;
    font-size: 13px;
    font-style: italic;
    text-decoration: none;
}

.caret-right {
    margin: 0 10px 0 auto;
    border: 4px solid transparent;
    border-left: 5px solid #888;
    border-right-width: 0;
}

.tools {
    display: flex;
    align-items: center;
    margin-left: 23px;
}

.tool {
    display: grid;
    place-items: center;
    width: 22px;
    height: 24px;
}

.tool svg,
.window-buttons svg {
    width: 18px;
    height: 18px;
}

.apart {
    margin-right: 6px;
}

.drop {
    display: grid;
    place-items: center;
    width: 19px;
    height: 24px;
}

.faded {
    opacity: 0.4;
}

h1 {
    flex: 1;
    margin: 0;
    font-size: 11px;
    font-weight: 400;
    text-align: center;
}

.command-search {
    display: flex;
    align-items: center;
    width: 189px;
    height: 21px;
    padding: 0 4px;
    gap: 6px;
    border: 1px solid #ccc;
    background: #fff;
    font-family: Roboto, sans-serif;
}

.command-search input {
    flex: 1;
}

.command-search input::placeholder {
    color: #666;
    opacity: 1;
}

.glass {
    color: #777;
}

.command-search .arrow {
    border-top-color: #777;
}

.window-buttons {
    display: flex;
    gap: 16px;
    padding: 0 7px 0 11px;
    color: #333;
}

.window-buttons button {
    display: flex;
}

/* ribbon */
.ribbon {
    display: flex;
    height: 76px;
    border-bottom: 1px solid #999;
    font-family: Roboto, "Open Sans", sans-serif;
}

.group {
    display: flex;
    margin: 2px 0;
    border-right: 1px solid #ccc;
}

.group-boss {
    width: 249px;
    padding-left: 3px;
}

.group-cut {
    width: 252px;
    padding-left: 3px;
}

.group-detail {
    width: 217px;
}

.group-ref {
    width: 101px;
    padding-left: 1px;
    border-right: 0;
}

.big {
    display: flex;
    flex-direction: column;
    align-items: center;
    width: 48px;
    padding-top: 3px;
    line-height: 12px;
}

.big svg,
.stack svg {
    width: 18px;
    height: 18px;
    flex: none;
}

.big span {
    margin-top: 2px;
}

.big .arrow {
    margin: auto 0 7px;
}

.wide {
    width: 56px;
}

.narrow {
    width: 40px;
}

.slim {
    width: 36px;
}

.pressed {
    margin: 1px;
    padding-top: 4px;
    border: 1px solid #aaa;
    background: #e4e4e4;
}

.stack {
    display: flex;
    flex-direction: column;
    justify-content: space-around;
    padding-left: 4px;
}

.stack button {
    display: flex;
    align-items: center;
    gap: 5px;
    white-space: nowrap;
}

.first {
    width: 61px;
}

.collapse {
    margin: auto 5px 5px auto;
}

/* command tabs */
.tabs {
    display: flex;
    height: 21px;
    background: #e9ecf5;
}

.tabs button {
    padding: 0 6px 0 7px;
    border: 1px solid #999;
    border-width: 0 1px 1px 0;
    background: #d8d8d8;
    white-space: nowrap;
}

.tabs .active {
    padding: 0 6px 0 5px;
    border-bottom: 0;
    background: #f7f7f7;
    font-weight: 600;
}

.tabs .roomy {
    padding: 0 13px;
}

.doc-buttons {
    display: flex;
    align-items: flex-start;
    gap: 12px;
    margin-left: auto;
    padding: 8px 10px 0 0;
}

.doc-buttons path {
    fill: none;
    stroke: #888;
}

.gap {
    margin-left: 24px;
}

/* feature tree */
.workspace {
    flex: 1;
    display: flex;
}

.panel {
    position: relative;
    z-index: 1;
    display: flex;
    flex-direction: column;
    width: 214px;
    padding-right: 2px;
    border-right: 1px solid #999;
}

.splitter {
    height: 23px;
    border-bottom: 1px solid #ccc;
    background: radial-gradient(circle at 104px 11px, #ccc 1px, #999 3px, transparent 4px);
}

.panel-tabs {
    display: flex;
    height: 25px;
}

.panel-tabs button {
    display: grid;
    place-items: center;
    width: 38px;
    border: 1px solid #999;
    border-left-width: 0;
    background: #d8d8d8;
}

.panel-tabs .active {
    width: 37px;
    border-bottom: 0;
    background: #f7f7f7;
}

.panel-tabs svg {
    width: 17px;
    height: 17px;
}

.panel-tabs .cut-off {
    width: 30px;
    border-right: 0;
    overflow: hidden;
}

.panel-tabs .spin {
    width: 16px;
    background: #fafafa;
    border-color: #bbb;
    color: #000;
}

.filter {
    display: flex;
    align-items: center;
    height: 24px;
    margin: 0 3px 0 2px;
    padding-left: 2px;
    border: 1px solid #ccc;
}

.filter svg {
    width: 17px;
    height: 17px;
}

.filter input {
    flex: 1;
}

.tree {
    display: grid;
    grid-auto-rows: 1fr;
    height: 352px;
    margin: 0;
    padding: 0;
    list-style: none;
    border-bottom: 2px solid #2f7fa8;
}

.tree li {
    display: flex;
    align-items: center;
    gap: 5px;
    padding-left: 23px;
    white-space: nowrap;
}

.tree svg {
    width: 17px;
    height: 17px;
    flex: none;
}

.tree .root {
    padding-left: 2px;
    gap: 3px;
}

.tree .open {
    padding-left: 7px;
}

.tree .open::before {
    content: "";
    margin-right: 7px;
    border: 3px solid transparent;
    border-left: 4px solid #555;
    border-right-width: 0;
}

.scrollbar {
    display: flex;
    align-items: center;
    gap: 5px;
    height: 14px;
    margin: auto 0 5px;
    padding: 0 4px;
}

.scrollbar path {
    fill: none;
    stroke: #444;
    stroke-width: 2;
}

.thumb {
    width: 158px;
    height: 14px;
    margin-right: auto;
    background: #cdcdcd;
}

.handle {
    position: absolute;
    right: -7px;
    top: 232px;
    width: 8px;
    height: 36px;
    border: 1px solid #999;
    border-left: 0;
    background: radial-gradient(circle at 3px 18px, #ccc 1px, #999 2px, #f7f7f7 3px);
}

/* graphics area */
.canvas {
    position: relative;
    flex: 1;
    display: flex;
    background: linear-gradient(#eef0f8, #fbfcfe 11%, #f7f8fc 24%, #e0e4ee 49%, #e4e8f1 57%, #fcfcfe 68%, #fff 88%, #f0f2f8);
}

.scene {
    width: 100%;
    overflow: visible;
}

.outline,
.thin,
.dim,
.dim-end,
.dim-small {
    fill: none;
    stroke: #2a2a2a;
    stroke-width: 2;
}

.thin,
.dim,
.dim-end,
.dim-small {
    stroke-width: 1.3;
    stroke: #444;
}

.dim path {
    marker-start: url(#arrow);
    marker-end: url(#arrow);
}

.dim-end path {
    marker-end: url(#arrow);
}

.dim-small {
    marker-start: url(#small);
    marker-end: url(#small);
}

.numbers text {
    font-family: "Liberation Sans", Arial, sans-serif;
    font-size: 22px;
    fill: #333;
    text-anchor: middle;
    dominant-baseline: central;
}

.view-tools {
    position: absolute;
    top: 5px;
    left: 365px;
    display: flex;
    gap: 6px;
}

.view-tools button {
    display: flex;
    align-items: center;
    gap: 6px;
}

.view-tools .menu {
    width: 32px;
}

.view-tools svg {
    width: 18px;
    height: 18px;
    flex: none;
}

.view-tools .arrow {
    border-top-color: #999;
}

/* model tabs */
.bottom-tabs {
    display: flex;
    height: 15px;
    border-top: 1px solid #999;
    border-bottom: 1px solid #999;
    line-height: 13px;
}

.bottom-tabs button {
    width: 64px;
    border-right: 1px solid #888;
    background: #d8d8d8;
}

.pager {
    width: 60px;
    background: #b4b4b4;
}

.pager svg {
    display: block;
}

.bottom-tabs .active {
    width: 54px;
    background: #f7f7f7;
    font-weight: 700;
}

.bottom-tabs .last {
    width: 101px;
    padding-right: 8px;
}

.status {
    display: flex;
    align-items: center;
    height: 18px;
}

.product {
    margin-right: auto;
    font-family: Roboto, sans-serif;
}

.warn {
    margin: 0 69px 0 27px;
}

.up {
    margin: 0 24px 0 17px;
    transform: rotate(180deg);
}

/* windows taskbar */
.taskbar {
    display: flex;
    height: 35px;
    background: #1b1b1b;
    color: #eee;
}

.start {
    display: grid;
    place-items: center;
    width: 42px;
}

.search {
    display: flex;
    align-items: center;
    width: 322px;
    padding-left: 11px;
    gap: 10px;
    background: #333;
    color: #ccc;
    font-size: 13px;
}

.search svg {
    transform: scaleX(-1);
}

.search input {
    flex: 1;
}

.search input::placeholder {
    color: #ccc;
    opacity: 1;
}

.app-icon {
    display: grid;
    place-items: center;
    width: 42px;
    margin-left: 4px;
}

.app-icon svg {
    width: 22px;
    height: 22px;
}

.current {
    background: #4a4a4a;
}

.sw,
.year {
    font-family: Roboto, sans-serif;
    font-weight: 700;
    font-size: 10px;
    fill: #fff;
    text-anchor: middle;
}

.year {
    font-size: 7px;
}

.tray {
    display: flex;
    align-items: center;
    gap: 8px;
    margin-left: auto;
    padding-right: 11px;
}

.tray svg {
    fill: none;
    stroke: #eee;
    stroke-width: 1.2;
}

.clock {
    width: 54px;
    line-height: 16px;
    text-align: center;
}

.tray .note {
    margin-left: 8px;
}

.note text {
    font-size: 11px;
    fill: #fff;
    stroke: none;
    text-anchor: middle;
}
```
